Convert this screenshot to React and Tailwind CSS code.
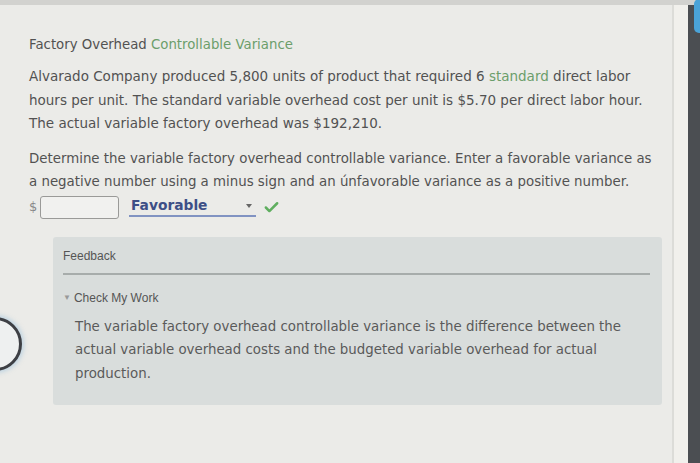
import { Check } from 'lucide-react';

const verdana = { fontFamily: '"DejaVu Sans", Verdana, sans-serif' };
const arial = { fontFamily: '"Liberation Sans", Arial, sans-serif' };

export default function App() {
  return (
    <div className="relative w-[700px] h-[463px] overflow-hidden bg-[#ebebe8] flex flex-col">
      <div className="h-[5px] bg-[#d2d2cf] shrink-0" />
      <div className="flex flex-1 min-h-0">
        <div className="flex-1 pl-[29px] pr-[10px] pt-[30px] text-[#525252]" style={verdana}>
          <h1 className="leading-[20px] font-normal text-[13.3px]">
            Factory Overhead <span className="text-[#6b9e6b]">Controllable Variance</span>
          </h1>

          <p className="mt-[10px] leading-[23.5px] text-[13.5px]">
            Alvarado Company produced 5,800 units of product that required 6{' '}
            <span className="text-[#6b9e6b]">standard</span> direct labor hours per unit. The standard
            variable overhead cost per unit is $5.70 per direct labor hour. The actual variable factory
            overhead was $192,210.
          </p>

          <p className="mt-[11px] leading-[23px] text-[13.35px] max-w-[628px]">
            Determine the variable factory overhead controllable variance. Enter a favorable variance as a
            negative number using a minus sign and an únfavorable variance as a positive number.
          </p>

          <div className="flex items-center h-[25px] mt-[2px] text-[13px]">
            <span className="text-[#888] w-[11px]">$</span>
            <div className="w-[79px] h-[23px] border border-[#9a9a98] rounded-[3px] bg-[#f1f1ef]" />
            <div className="ml-[10px] w-[127px] h-[20px] flex items-center justify-between border-b-2 border-[#8193c2] pl-[2px] pr-[4px]">
              <span className="font-bold text-[#3d4f86] text-[13.8px] leading-none">Favorable</span>
              <span className="w-0 h-0 border-l-[3px] border-r-[3px] border-t-[4px] border-l-transparent border-r-transparent border-t-[#666]" />
            </div>
            <Check className="ml-[7px] w-[17px] h-[17px] text-[#5fae5f]" strokeWidth={3.5} />
          </div>

          <div className="mt-[17px] ml-[24px] w-[609px] h-[168px] bg-[#d9dddc] rounded-[3px] px-[10px] pt-[10px]">
            <div className="text-[12px] leading-[18px] text-[#555] pb-[8px] border-b-2 border-[#a7acab] mr-[2px]" style={arial}>
              Feedback
            </div>
            <div className="mt-[14px] flex items-center gap-[3px] text-[12px] leading-[18px] text-[#555]" style={arial}>
              <span className="text-[8px] text-[#999]">▼</span>
              <span>Check My Work</span>
            </div>
            <p className="mt-[8px] ml-[12px] leading-[23.5px] text-[13.35px] text-[#5a5a5a] pr-[20px]">
              The variable factory overhead controllable variance is the difference between the actual
              variable overhead costs and the budgeted variable overhead for actual production.
            </p>
          </div>
        </div>
        <div className="w-[2px] bg-[#dcdcd8]" />
        <div className="w-[16px] bg-[#f1f0ec]" />
        <div className="w-[14px] bg-[#4b4e52] relative">
          <div className="absolute right-[-4px] top-[-6px] w-[10px] h-[34px] rounded-[5px] bg-[#4aa3d8]" />
        </div>
      </div>
      <div className="absolute left-[-32px] top-[317px] w-[54px] h-[54px] rounded-full border-[3px] border-[#3d3f44] shadow-[0_0_4px_2px_rgba(150,190,220,0.5)] bg-[#eef0f0]" />
    </div>
  );
}
